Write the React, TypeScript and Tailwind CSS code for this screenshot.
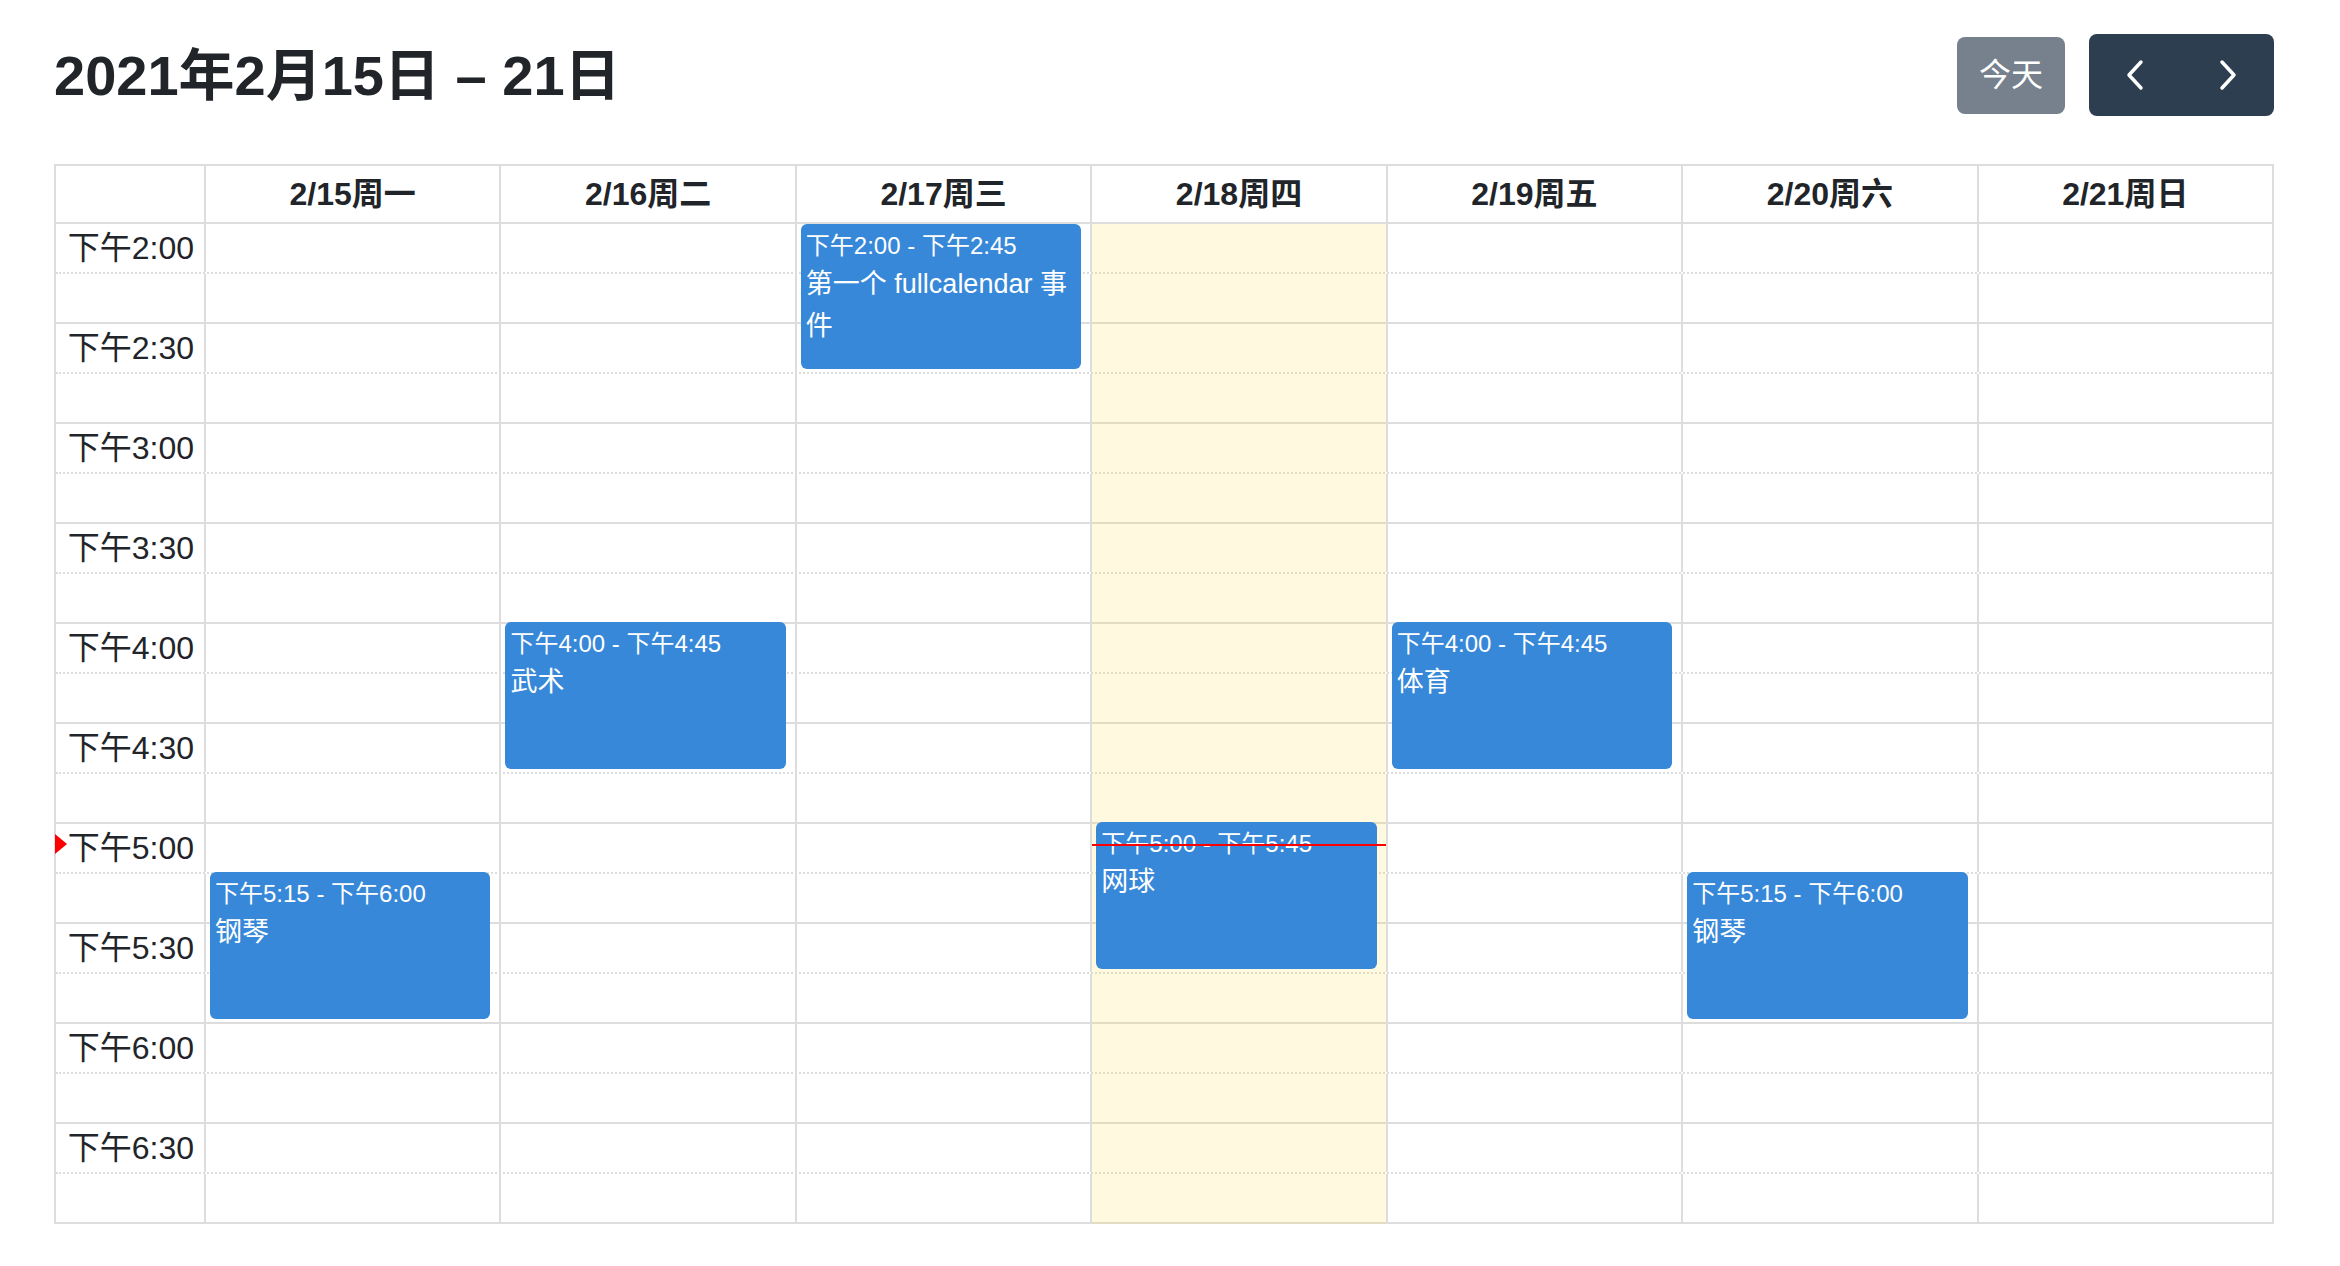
import React from 'react';

interface CalEvent {
  day: number;
  start: number; // minutes since midnight
  end: number;
  title: string;
}

const DAYS = ['2/15周一', '2/16周二', '2/17周三', '2/18周四', '2/19周五', '2/20周六', '2/21周日'];
const TODAY = 3;

const EVENTS: CalEvent[] = [
  { day: 0, start: 17 * 60 + 15, end: 18 * 60, title: '钢琴' },
  { day: 1, start: 16 * 60, end: 16 * 60 + 45, title: '武术' },
  { day: 2, start: 14 * 60, end: 14 * 60 + 45, title: '第一个 fullcalendar 事件' },
  { day: 3, start: 17 * 60, end: 17 * 60 + 45, title: '网球' },
  { day: 4, start: 16 * 60, end: 16 * 60 + 45, title: '体育' },
  { day: 5, start: 17 * 60 + 15, end: 18 * 60, title: '钢琴' },
];

const DAY_START = 14 * 60;
const PX_PER_MIN = 10 / 3; // 100px per half hour
const SLOTS = 20; // 15-minute slots, 2pm to 7pm

function fmt(m: number) {
  const h = Math.floor(m / 60) - 12;
  const mm = String(m % 60).padStart(2, '0');
  return `下午${h}:${mm}`;
}

function Chevron({ dir }: { dir: 'left' | 'right' }) {
  return (
    <svg width="18" height="32" viewBox="0 0 18 32" fill="none">
      <polyline
        points={dir === 'left' ? '15,3 3,16 15,29' : '3,3 15,16 3,29'}
        stroke="white"
        strokeWidth="3.5"
        strokeLinecap="round"
        strokeLinejoin="round"
      />
    </svg>
  );
}

export default function App() {
  const nowOffset = 620;

  return (
    <div className="min-h-screen bg-white pl-[54px] pr-[66px] pt-[34px] font-['Liberation_Sans','Noto_Sans_CJK_SC',sans-serif] text-[#212529]">
      {/* toolbar */}
      <div className="flex items-center justify-between mb-[48px] h-[82px]">
        <h2 className="text-[56px] leading-[67px] font-semibold">2021年2月15日 – 21日</h2>
        <div className="flex items-center gap-[24px]">
          <button className="w-[108px] h-[77px] rounded-[8px] bg-[#76818d] text-white text-[32px] leading-[48px] flex items-center justify-center">
            今天
          </button>
          <div className="w-[185px] h-[82px] rounded-[8px] bg-[#2c3e50] flex">
            <button className="flex-1 flex items-center justify-center">
              <Chevron dir="left" />
            </button>
            <button className="flex-1 flex items-center justify-center">
              <Chevron dir="right" />
            </button>
          </div>
        </div>
      </div>

      {/* calendar */}
      <div className="border-x-2 border-t-2 border-[#ddd]">
        <div className="grid grid-cols-[148px_repeat(7,1fr)] border-b-2 border-[#ddd]">
          <div className="h-[56px]" />
          {DAYS.map(d => (
            <div key={d} className="h-[56px] border-l-2 border-[#ddd] flex items-center justify-center text-[32px] font-bold">
              {d}
            </div>
          ))}
        </div>

        <div className="relative">
          {Array.from({ length: SLOTS }).map((_, i) => {
            const label = i % 2 === 0 ? fmt(DAY_START + i * 15) : '';
            return (
              <div
                key={i}
                className={`grid grid-cols-[148px_repeat(7,1fr)] h-[50px] border-b-2 border-[#ddd] ${i % 2 === 0 ? 'border-dotted' : 'border-solid'}`}
              >
                <div className="text-right pr-[10px] text-[32px] leading-[48px] whitespace-nowrap">{label}</div>
                {DAYS.map(d => (
                  <div key={d} className="border-l-2 border-solid border-[#ddd]" />
                ))}
              </div>
            );
          })}

          {/* columns with events */}
          <div className="absolute inset-0 grid grid-cols-[148px_repeat(7,1fr)]">
            <div className="relative">
              <div className="absolute left-[-1px] top-[610px] w-0 h-0 border-y-[10px] border-y-transparent border-l-[12px] border-l-[#ff0000]" />
            </div>
            {DAYS.map((d, di) => (
              <div
                key={d}
                className={`relative border-l-2 border-transparent bg-clip-padding ${di === TODAY ? 'bg-[rgba(255,220,40,0.15)]' : ''}`}
              >
                {EVENTS.filter(e => e.day === di).map((e, k) => {
                  const top = Math.max(0, (e.start - DAY_START) * PX_PER_MIN - 2);
                  const bottom = (e.end - DAY_START) * PX_PER_MIN - 5;
                  return (
                    <div
                      key={k}
                      className="absolute left-[4px] right-[9px] rounded-[6px] bg-[#3788d8] text-white px-[5px] pt-[4px] overflow-hidden"
                      style={{ top, height: bottom - top }}
                    >
                      <div className="text-[24px] leading-[35px] whitespace-nowrap">
                        {fmt(e.start)} - {fmt(e.end)}
                      </div>
                      <div className="text-[27px] leading-[42px]">{e.title}</div>
                    </div>
                  );
                })}
                {di === TODAY && (
                  <div className="absolute left-0 right-0 h-[2px] bg-[#ff0000]" style={{ top: nowOffset }} />
                )}
              </div>
            ))}
          </div>
        </div>
      </div>
    </div>
  );
}
